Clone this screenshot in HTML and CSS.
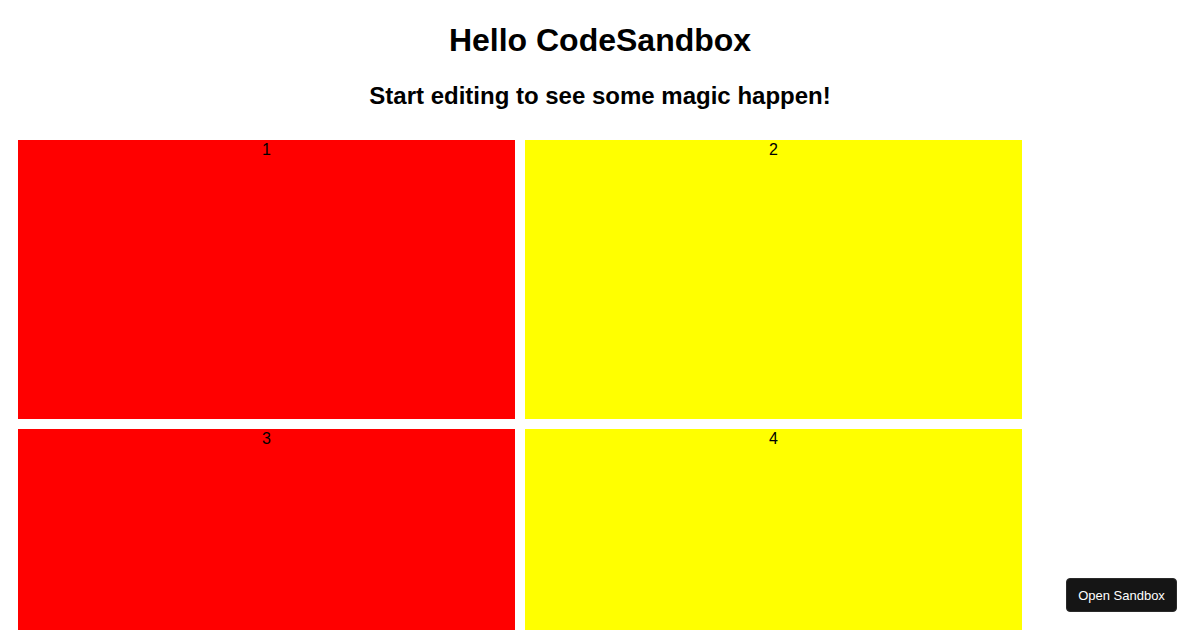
FILE: index.html
```html
<!DOCTYPE html>
<html>
<head>
<meta charset="utf-8">
<link rel="stylesheet" href="styles.css">
</head>
<body>
<div class="app">
  <h1>Hello CodeSandbox</h1>
  <h2>Start editing to see some magic happen!</h2>
  <div class="grid">
    <div class="cell red">1</div>
    <div class="cell yellow">2</div>
    <div class="cell red">3</div>
    <div class="cell yellow">4</div>
  </div>
</div>
<a class="open-btn">Open Sandbox</a>
</body>
</html>
```

FILE: styles.css
```css
body {
  margin: 8px;
  font-family: "Liberation Sans", Arial, sans-serif;
  color: #000;
  background: #fff;
}
.app {
  text-align: center;
}
h1 {
  font-size: 32px;
  margin: 14.44px 0 22.44px;
}
h2 {
  font-size: 24px;
  margin: 19.92px 0;
}
.grid {
  display: grid;
  grid-template-columns: 497px 497px;
  grid-auto-rows: 279px;
  gap: 10px;
  padding: 9.8px 10px 0 10px;
}
.cell {
  font-size: 16px;
  line-height: 20px;
}
.red { background: #ff0000; }
.yellow { background: #ffff00; }
.open-btn {
  position: fixed;
  right: 23px;
  bottom: 18px;
  width: 111px;
  height: 34px;
  box-sizing: border-box;
  display: flex;
  align-items: center;
  justify-content: center;
  background: #151515;
  color: #fff;
  font-size: 13px;
  border-radius: 4px;
  border: 1px solid #2a2a2a;
}
```
